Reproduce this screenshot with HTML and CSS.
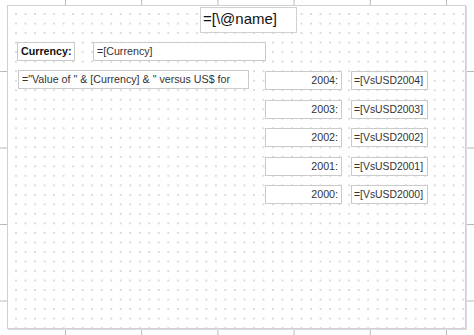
FILE: index.html
```html
<!DOCTYPE html>
<html lang="en">
<head>
  <meta charset="UTF-8" />
  <title>Report Design</title>
  <link rel="stylesheet" href="styles.css">
</head>
<body>
  <div class="frame">
    <div class="canvas">
      <!-- Page header -->
      <div class="title-row">
        <div class="ctl title">=[\@name]</div>
      </div>
      <div class="currency-row">
        <div class="ctl label">Currency:</div>
        <div class="ctl field currency">=[Currency]</div>
      </div>
      <!-- Detail -->
      <div class="detail">
        <div class="ctl field caption">="Value of " &amp; [Currency] &amp; " versus US$ for</div>
        <div class="years">
          <div class="year-row"><div class="ctl year">2004:</div><div class="ctl field value">=[VsUSD2004]</div></div>
          <div class="year-row"><div class="ctl year">2003:</div><div class="ctl field value">=[VsUSD2003]</div></div>
          <div class="year-row"><div class="ctl year">2002:</div><div class="ctl field value">=[VsUSD2002]</div></div>
          <div class="year-row"><div class="ctl year">2001:</div><div class="ctl field value">=[VsUSD2001]</div></div>
          <div class="year-row"><div class="ctl year">2000:</div><div class="ctl field value">=[VsUSD2000]</div></div>
        </div>
      </div>
    </div>
  </div>
</body>
</html>
```

FILE: styles.css
```css
* { margin:0; padding:0; box-sizing:border-box; }
html, body { height:100%; background:#FFF; font-family:"Liberation Sans", Arial, sans-serif; }

/* ruler ticks around the design surface */
.frame {
  width:474px; height:335px; padding:5px 8px 6px 7px;
  background:
    linear-gradient(to right, #B8B8B8 1px, transparent 1px) 65px 0 / 76.2px 100% repeat-x,
    linear-gradient(to bottom, #B8B8B8 1px, transparent 1px) 0 71px / 100% 76.5px repeat-y;
}
.canvas {
  height:100%;
  border:1px solid #D0D0D0;
  box-shadow:1px 1px 0 #DCDCDC;
  background-color:#FFF;
  background-image:radial-gradient(circle, #D2D2D2 0.6px, transparent 1px);
  background-size:9.525px 9.525px;
  background-position:3.3px 3.3px;
}

.ctl {
  background:#FFF; border:1px solid #CACACA;
  color:#333; font-size:10.7px; line-height:15px;
  height:19px; padding:1px 3px 0; white-space:nowrap; overflow:hidden;
}

.title-row { display:flex; padding:1px 0 0 192px; }
.title { width:97px; height:26px; font-size:15px; line-height:22px; color:#111; padding:0 2px; border-color:#D0D0D0; }

.currency-row { display:flex; margin-top:9px; padding-left:9px; }
.label { width:58px; font-weight:bold; color:#111; }
.currency { width:173px; margin-left:18px; }

.detail { display:flex; margin-top:9px; padding-left:10px; }
.caption { width:231px; }
.years { display:flex; flex-direction:column; gap:9.6px; margin:1px 0 0 16px; }
.year-row { display:flex; }
.year { width:77px; text-align:right; padding-right:3px; }
.value { width:77px; margin-left:9px; font-size:10.4px; padding-left:2px; }
```
